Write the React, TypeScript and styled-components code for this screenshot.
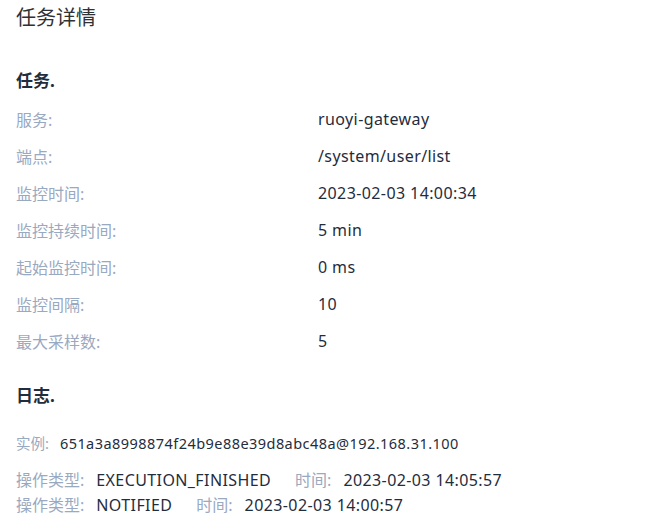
import React from "react";
import styled, { createGlobalStyle } from "styled-components";

const GlobalStyle = createGlobalStyle`
  html, body { margin: 0; padding: 0; background: #ffffff; }
  body { font-family: "Noto Sans", "Noto Sans CJK SC", sans-serif; }
`;

const Page = styled.div`
  width: 654px;
  height: 529px;
  box-sizing: border-box;
  padding: 5px 16px 0 16px;
  overflow: hidden;
`;

const Title = styled.div`
  font-size: 20px;
  line-height: 26px;
  color: #303133;
`;

const SectionHeading = styled.div<{ $top: number }>`
  margin-top: ${(p) => p.$top}px;
  font-size: 17px;
  line-height: 24px;
  font-weight: 700;
  color: #1f2d3d;
`;

const InfoGrid = styled.div`
  display: grid;
  grid-template-columns: 302px 1fr;
  grid-auto-rows: 37px;
  align-items: center;
  margin-top: 7px;
`;

const InfoLabel = styled.div`
  font-size: 16px;
  color: #99a9bf;
`;

const InfoValue = styled.div`
  font-size: 16px;
  letter-spacing: 0.4px;
  color: #1f2d3d;
`;

const LogBlock = styled.div`
  margin-top: 23px;
  display: flex;
  flex-direction: column;
`;

const LogLine = styled.div<{ $gap: number; $small?: boolean }>`
  display: flex;
  align-items: center;
  font-size: ${(p) => (p.$small ? 14.5 : 16)}px;
  line-height: 25px;
  margin-top: ${(p) => p.$gap}px;
`;

const LogLabel = styled.span<{ $space?: number }>`
  color: #99a9bf;
  margin-right: ${(p) => p.$space ?? 12}px;
`;

const LogValue = styled.span<{ $tight?: boolean }>`
  color: #1f2d3d;
  letter-spacing: ${(p) => (p.$tight ? 0.45 : 0.4)}px;
  margin-right: 24px;
`;

const taskRows: [string, string][] = [
  ["服务:", "ruoyi-gateway"],
  ["端点:", "/system/user/list"],
  ["监控时间:", "2023-02-03 14:00:34"],
  ["监控持续时间:", "5 min"],
  ["起始监控时间:", "0 ms"],
  ["监控间隔:", "10"],
  ["最大采样数:", "5"],
];

const logs: [string, string][] = [
  ["EXECUTION_FINISHED", "2023-02-03 14:05:57"],
  ["NOTIFIED", "2023-02-03 14:00:57"],
];

export default function App() {
  return (
    <>
      <GlobalStyle />
      <Page>
        <Title>任务详情</Title>
        <SectionHeading $top={38}>任务.</SectionHeading>
        <InfoGrid>
          {taskRows.map(([k, v]) => (
            <React.Fragment key={k}>
              <InfoLabel>{k}</InfoLabel>
              <InfoValue>{v}</InfoValue>
            </React.Fragment>
          ))}
        </InfoGrid>
        <SectionHeading $top={25}>日志.</SectionHeading>
        <LogBlock>
          <LogLine $gap={0} $small>
            <LogLabel $space={11}>实例:</LogLabel>
            <LogValue $tight>651a3a8998874f24b9e88e39d8abc48a@192.168.31.100</LogValue>
          </LogLine>
          {logs.map(([type, time], i) => (
            <LogLine key={type} $gap={i === 0 ? 12 : 0}>
              <LogLabel>操作类型:</LogLabel>
              <LogValue>{type}</LogValue>
              <LogLabel>时间:</LogLabel>
              <LogValue>{time}</LogValue>
            </LogLine>
          ))}
        </LogBlock>
      </Page>
    </>
  );
}
